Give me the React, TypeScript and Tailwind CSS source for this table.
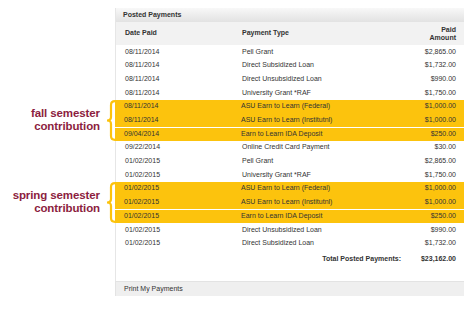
const top = [
  ['08/11/2014', 'Pell Grant', '$2,865.00'],
  ['08/11/2014', 'Direct Subsidized Loan', '$1,732.00'],
  ['08/11/2014', 'Direct Unsubsidized Loan', '$990.00'],
  ['08/11/2014', 'University Grant *RAF', '$1,750.00'],
];

const fall = [
  ['08/11/2014', 'ASU Earn to Learn (Federal)', '$1,000.00'],
  ['08/11/2014', 'ASU Earn to Learn (Institutnl)', '$1,000.00'],
  ['09/04/2014', 'Earn to Learn IDA Deposit', '$250.00'],
];

const middle = [
  ['09/22/2014', 'Online Credit Card Payment', '$30.00'],
  ['01/02/2015', 'Pell Grant', '$2,865.00'],
  ['01/02/2015', 'University Grant *RAF', '$1,750.00'],
];

const spring = [
  ['01/02/2015', 'ASU Earn to Learn (Federal)', '$1,000.00'],
  ['01/02/2015', 'ASU Earn to Learn (Institutnl)', '$1,000.00'],
  ['01/02/2015', 'Earn to Learn IDA Deposit', '$250.00'],
];

const bottom = [
  ['01/02/2015', 'Direct Unsubsidized Loan', '$990.00'],
  ['01/02/2015', 'Direct Subsidized Loan', '$1,732.00'],
];

function Row({ row, divider }: { row: string[]; divider?: boolean }) {
  return (
    <div className={`flex h-[13.7px] items-center text-[7px] text-[#333] ${divider ? 'border-t border-white' : ''}`}>
      <span className="w-[126px] pl-[9px]">{row[0]}</span>
      <span className="flex-1">{row[1]}</span>
      <span className="pr-[8px]">{row[2]}</span>
    </div>
  );
}

function Plain({ rows }: { rows: string[][] }) {
  return (
    <div className="ml-[115px] w-[349px] border-l border-[#e6e6e6] bg-white">
      {rows.map((r, i) => (
        <Row key={i} row={r} />
      ))}
    </div>
  );
}

// yellow highlighted rows with the brace + label on the left
function Group({ label, rows }: { label: string; rows: string[][] }) {
  return (
    <div className="flex">
      <div className="flex w-[105px] flex-col items-end justify-center pr-[5px] text-right text-[11.5px] font-bold leading-[13px] tracking-[-0.1px] text-[#8c1d40]">
        <span>{label}</span>
        <span>contribution</span>
      </div>
      <svg width="10" height="41" viewBox="0 0 10 41" className="shrink-0">
        <path
          d="M10 1.2 Q6 1.2 6 5 L6 17 Q6 20.5 2 20.5 Q6 20.5 6 24 L6 36 Q6 39.8 10 39.8"
          fill="none"
          stroke="#fcc30d"
          strokeWidth="2.2"
          strokeLinecap="round"
        />
      </svg>
      <div className="w-[349px] bg-[#fcc30d]">
        {rows.map((r, i) => (
          <Row key={i} row={r} divider={i === 2} />
        ))}
      </div>
    </div>
  );
}

export default function App() {
  return (
    <div className="h-[316px] w-[474px] overflow-hidden bg-white pt-[8px] font-['Liberation_Sans',Arial,sans-serif]">
      <div className="ml-[115px] flex h-[14px] w-[349px] items-center border-l border-[#e6e6e6] bg-gradient-to-b from-[#f8f8f8] to-[#e2e2e2] pl-[7px] text-[7px] font-bold text-[#333]">
        Posted Payments
      </div>
      <div className="ml-[115px] flex h-[23px] w-[349px] items-center border-l border-[#e6e6e6] bg-[#f2f2f2] text-[7px] font-bold text-[#333]">
        <span className="w-[126px] pl-[9px]">Date Paid</span>
        <span className="flex-1">Payment Type</span>
        <span className="pr-[8px] text-right leading-[8px]">
          Paid
          <br />
          Amount
        </span>
      </div>
      <Plain rows={top} />
      <Group label="fall semester" rows={fall} />
      <Plain rows={middle} />
      <Group label="spring semester" rows={spring} />
      <Plain rows={bottom} />
      <div className="ml-[115px] w-[349px] border-l border-[#e6e6e6]">
        <div className="flex h-[17px] items-center justify-end text-[7px] font-bold text-[#333]">
          <span>Total Posted Payments:</span>
          <span className="w-[63px] pr-[8px] text-right">$23,162.00</span>
        </div>
        <div className="h-[13.5px]" />
      </div>
      <div className="ml-[115px] flex h-[15px] w-[349px] items-center border-t border-l border-[#e3e3e3] bg-[#efefef] pl-[8px] text-[7px] text-[#333]">
        Print My Payments
      </div>
    </div>
  );
}
